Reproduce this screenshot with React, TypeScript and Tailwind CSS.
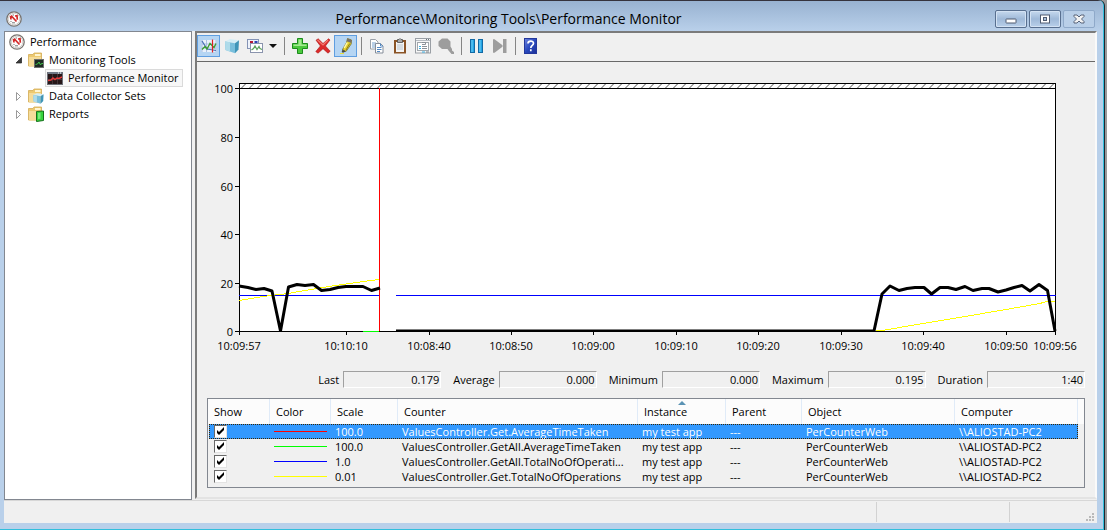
import React, { useState } from "react";

type IconProps = { children: React.ReactNode };

function Icon({ children }: IconProps) {
  return (
    <svg viewBox="0 0 16 16" className="size-4 shrink-0" aria-hidden="true">
      {children}
    </svg>
  );
}

function GaugeIcon() {
  return (
    <Icon>
      <circle cx="8" cy="8" r="7.2" fill="#fdfdfd" stroke="#77736f" strokeWidth="1.3" />
      <circle cx="8" cy="8" r="5.8" fill="none" stroke="#c9c5c0" strokeWidth="0.8" />
      <path d="M4.500 5l.5 3.500M5 4.500l5.500 6M9 5l2-.2.3 4" stroke="#d42a2a" strokeWidth="1.7" fill="none" />
      <path d="M6.500 4h1.500M6 11.800h3M4.500 10l1 1" stroke="#555" strokeWidth="0.8" />
    </Icon>
  );
}

function FolderBase() {
  return (
    <>
      <path d="M0.500 2.500h4.500l1-1.500h7.500v13h-13z" fill="#ecc970" stroke="#d3ab55" strokeWidth="0.8" />
      <path d="M1 5h12v9.500h-12z" fill="#f5dc9a" />
      <path d="M7 2h5.500v2H7z" fill="#fff5d0" />
    </>
  );
}

function MonitorFolderIcon() {
  return (
    <Icon>
      <FolderBase />
      <rect x="6.500" y="7.500" width="9" height="8" fill="#1e2a22" stroke="#6d6f6d" />
      <path d="M7.500 12.500l2-.5 1.500-2 1.500 3 1-1.500h1.500" stroke="#41c24a" fill="none" />
    </Icon>
  );
}

function CubeShape() {
  return (
    <>
      <path d="M1 3.500L6 1l9 1.200-4 3z" fill="#d5eef6" />
      <path d="M1 3.500l10 1.700v10L1.500 12z" fill="#79bfdc" />
      <path d="M11 5.200l4-3-.5 9.300-3.500 3.700z" fill="#3f95b8" />
      <path d="M1 3.500l5 .8v9.400L1.500 12z" fill="#aedbea" />
    </>
  );
}

function DataFolderIcon() {
  return (
    <Icon>
      <FolderBase />
      <g transform="translate(4.500 4.500) scale(0.74)">
        <CubeShape />
      </g>
    </Icon>
  );
}

function ReportFolderIcon() {
  return (
    <Icon>
      <FolderBase />
      <path d="M8.500 5.500l7-.5v9.500l-7 1z" fill="#36d23c" stroke="#15701c" />
      <path d="M10 7l2.500-.3v6l-2.500 .4z" fill="#7aea7c" />
    </Icon>
  );
}

function PerfMonIcon() {
  return (
    <Icon>
      <rect x="0.500" y="2.500" width="15" height="12" fill="#261719" stroke="#6b6e76" />
      <rect x="1" y="2" width="14" height="2" fill="#6f7885" />
      <path d="M11 3h1m1 0h1" stroke="#fff" />
      <path d="M1 9.500h14M5.500 4v10M10.500 4v10" stroke="#59484b" strokeWidth="0.6" />
      <path d="M1 10.500l3-.5 2-2 2 1.500 2-1.500 2 .5 3-1.500" stroke="#e53a3a" strokeWidth="1.4" fill="none" />
    </Icon>
  );
}

function GraphViewIcon() {
  return (
    <Icon>
      <rect x="0.500" y="2" width="15" height="12" fill="#e9f1fb" />
      <path d="M1 2v12M5.500 2v12M1 6h14M1 10h14M15 2v12" stroke="#9cb4da" strokeWidth="0.8" />
      <path d="M1 3l5 8 3 .5 6 1" stroke="#4870b6" strokeWidth="1.2" fill="none" />
      <path d="M1 11.500l3-3 2 2.500 3-5.500 2 2 2 2 2-4" stroke="#3d9d33" strokeWidth="1.400" fill="none" />
      <path d="M11.500 1.500v13" stroke="#e02222" strokeWidth="1.200" />
    </Icon>
  );
}

function GraphTypeIcon() {
  return (
    <Icon>
      <rect x="0.500" y="1.500" width="11" height="9" fill="#eef2fa" stroke="#8493b5" />
      <rect x="3" y="3" width="3" height="2.500" fill="#b51935" />
      <rect x="7.500" y="3" width="3" height="2" fill="#2c3fb2" />
      <rect x="3.500" y="5.500" width="12" height="9" fill="#fff" stroke="#8a94ad" />
      <path d="M4.500 12l2-1.500 1.500-2.500 2 3.500L12 8.500l1 2 2 1" stroke="#5aa35b" fill="none" strokeWidth="1.200" />
    </Icon>
  );
}

function PlusIcon() {
  return (
    <Icon>
      <path d="M5.500.5h5v5h5v5h-5v5h-5v-5h-5v-5h5z" fill="#4cc93e" stroke="#1b8c1b" />
      <path d="M6.500 1.500h3v5h5v1.500h-13V6.500h5z" fill="#a3ea91" />
    </Icon>
  );
}

function DeleteIcon() {
  return (
    <Icon>
      <path d="M1 2.200L3.200.8 8 5.500 13.500.8 15 2l-4.600 6 4.800 5.200-2.200 2L8 10.700l-5 4.500-2.200-1.600L5.400 8z" fill="#dc2a2a" stroke="#a91616" strokeWidth="0.6" />
      <path d="M2.500 2L8 7l5-5" stroke="#f37a70" strokeWidth="1.100" fill="none" />
    </Icon>
  );
}

function HighlighterIcon() {
  return (
    <Icon>
      <path d="M9.500.5l4 1.500-.3 4-5.200 7.500-3.500-2 4-7z" fill="#e6d22c" stroke="#6d6420" strokeWidth="0.7" />
      <path d="M9.500.5l4 1.500-.2 3-4.500-1.800z" fill="#77706a" />
      <path d="M9.200 4.500L6.200 10" stroke="#fff9b0" strokeWidth="1.500" />
      <path d="M11.800 5.500L8 12" stroke="#8b7d1f" strokeWidth="1" />
      <path d="M4.500 11.500l3.300 1.900-2.800 1.300-1.300-.8z" fill="#4a4c42" />
      <path d="M2 15.500h4" stroke="#e8e13c" />
    </Icon>
  );
}

function CopyIcon() {
  return (
    <Icon>
      <path d="M1.500 1.500h5l2.500 2.500v7h-7.500z" fill="#fff" stroke="#9aa0a8" />
      <path d="M3 5h4M3 7h4M3 9h3" stroke="#74a0cd" />
      <path d="M6.500 5.500h5l2.500 2.500v7h-7.500z" fill="#fff" stroke="#858d99" />
      <path d="M11.500 5.500v2.500H14M8 9.500h4.500M8 11.500h4.500M8 13.500h3" stroke="#5388c4" fill="none" />
    </Icon>
  );
}

function PasteIcon() {
  return (
    <Icon>
      <rect x="2" y="2" width="12" height="13.500" fill="#8b5426" />
      <rect x="4" y="4" width="8" height="10" fill="#f4f4f4" />
      <path d="M5.500 1.500h1.500L8 .5l1 1h1.500v3h-5z" fill="#a9a9a9" stroke="#4d4d4d" strokeWidth="0.8" />
      <path d="M5 7h6M5 9h6M5 11h6" stroke="#9db0bd" strokeWidth="0.7" />
    </Icon>
  );
}

function PropertiesIcon() {
  return (
    <Icon>
      <rect x="0.500" y="0.500" width="15" height="14.500" fill="#f7f7f7" stroke="#9a9fa5" />
      <path d="M1 2.500h14" stroke="#b7bcc2" />
      <path d="M11 1.500h1m1 0h1" stroke="#69717a" />
      <rect x="2.500" y="4.500" width="11" height="8" fill="#fff" stroke="#a1a7ac" />
      <path d="M7 4.500h3.500v2H7M7 8.500h5M7 10.500h5" stroke="#8c9198" fill="none" />
      <path d="M4 8.500h2M4 10.500h2M7 14h3" stroke="#37aee2" />
      <path d="M11 14h3" stroke="#7c8288" />
    </Icon>
  );
}

function ZoomIcon() {
  return (
    <Icon>
      <path d="M4 .5h5.500L12.500 3.500v5l1.500 2.500v1.500l2 1.500v2h-2.500L10.500 12.500 9.500 11H4L.5 8V3.500z" fill="#9d9d9d" />
    </Icon>
  );
}

function PauseIcon() {
  return (
    <Icon>
      <rect x="1.500" y="1.500" width="4" height="13" fill="#24a4e4" stroke="#126aa5" />
      <rect x="9.500" y="1.500" width="4" height="13" fill="#24a4e4" stroke="#126aa5" />
      <path d="M3 2v12M11 2v12" stroke="#75cff6" />
    </Icon>
  );
}

function StepIcon() {
  return (
    <Icon>
      <path d="M1 1.200h1.500l8 6v1.600l-8 6H1zM11 1h3.500v14H11z" fill="#9d9d9d" />
    </Icon>
  );
}

function HelpIcon() {
  return (
    <svg viewBox="0 0 16 16" className="size-4 shrink-0" aria-hidden="true">
      <defs>
        <linearGradient id="help-blue" x1="0" y1="0" x2="1" y2="1">
          <stop offset="0" stopColor="#6f86e0" />
          <stop offset="0.500" stopColor="#2848bd" />
          <stop offset="1" stopColor="#1d3198" />
        </linearGradient>
      </defs>
      <rect x="1.500" y="0.500" width="12" height="15" fill="url(#help-blue)" stroke="#23379b" />
      <path d="M5 5.500C5 2.300 10.500 2.300 10.500 5.300 10.500 7.500 7.800 7.400 7.800 10M7.800 11.300v2" stroke="#fff" strokeWidth="1.700" fill="none" />
    </svg>
  );
}

function ToolButton({ label, active, children }: { label: string; active?: boolean; children: React.ReactNode }) {
  return (
    <button
      type="button"
      aria-label={label}
      className={
        active
          ? "flex h-[22px] w-[23px] items-center justify-center border border-[#5f9ee0] bg-[#b5d5f3]"
          : "flex h-[22px] w-[23px] items-center justify-center"
      }
    >
      {children}
    </button>
  );
}

function Separator() {
  return (
    <div className="flex h-[22px] w-2 items-center justify-center">
      <div className="h-[18px] w-px bg-[#858585]" />
    </div>
  );
}

function Toolbar() {
  return (
    <div role="toolbar" aria-label="Graph" className="flex h-[29px] items-start border-b border-[#696969] pt-0.5">
      <ToolButton label="View current activity" active><GraphViewIcon /></ToolButton>
      <ToolButton label="View log data"><Icon><CubeShape /></Icon></ToolButton>
      <ToolButton label="Change graph type"><GraphTypeIcon /></ToolButton>
      <button type="button" aria-label="Graph type menu" className="flex h-[22px] w-3.5 items-center justify-center">
        <svg viewBox="0 0 8 4" className="h-1 w-2" aria-hidden="true"><path d="M0 0h8L4 4z" fill="#111" /></svg>
      </button>
      <Separator />
      <ToolButton label="Add"><PlusIcon /></ToolButton>
      <ToolButton label="Delete"><DeleteIcon /></ToolButton>
      <ToolButton label="Highlight" active><HighlighterIcon /></ToolButton>
      <Separator />
      <ToolButton label="Copy properties"><CopyIcon /></ToolButton>
      <ToolButton label="Paste counter list"><PasteIcon /></ToolButton>
      <ToolButton label="Properties"><PropertiesIcon /></ToolButton>
      <ToolButton label="Zoom"><ZoomIcon /></ToolButton>
      <Separator />
      <ToolButton label="Freeze display"><PauseIcon /></ToolButton>
      <ToolButton label="Update data"><StepIcon /></ToolButton>
      <Separator />
      <ToolButton label="Help"><HelpIcon /></ToolButton>
    </div>
  );
}

function Expander({ open }: { open?: boolean }) {
  return (
    <svg viewBox="0 0 8 10" className="h-2.5 w-2 shrink-0" aria-hidden="true">
      {open ? (
        <path d="M6.500 2.500v5.500h-5.500z" fill="#3b3b3b" stroke="#222" strokeWidth="0.700" />
      ) : (
        <path d="M1.500 1.500v8L5.500 5.500z" fill="#fff" stroke="#9a9a9a" />
      )}
    </svg>
  );
}

function Tree() {
  return (
    <nav aria-label="Console tree" className="w-[188px] shrink-0 border border-[#828790] bg-white pt-px whitespace-nowrap">
      <ul>
        <li className="flex h-[18px] items-center gap-[5px] pl-1"><GaugeIcon />Performance</li>
        <li className="flex h-[18px] items-center pl-[10px]">
          <Expander open /><span className="ml-[5px] flex items-center gap-[5px]"><MonitorFolderIcon />Monitoring Tools</span>
        </li>
        <li className="flex h-[18px] items-center pl-10">
          <span className="flex h-[18px] items-center gap-[5px] border border-[#dadada] bg-[#f7f7f7] pl-px pr-[3px]"><PerfMonIcon />Performance Monitor</span>
        </li>
        <li className="flex h-[18px] items-center pl-[10px]">
          <Expander /><span className="ml-[5px] flex items-center gap-[5px]"><DataFolderIcon />Data Collector Sets</span>
        </li>
        <li className="flex h-[18px] items-center pl-[10px]">
          <Expander /><span className="ml-[5px] flex items-center gap-[5px]"><ReportFolderIcon />Reports</span>
        </li>
      </ul>
    </nav>
  );
}

const yTicks = [
  { label: "100", y: 88 },
  { label: "80", y: 137 },
  { label: "60", y: 186 },
  { label: "40", y: 234 },
  { label: "20", y: 283 },
  { label: "0", y: 331 },
];

const xTicks = [
  { label: "10:09:57", x: 239 },
  { label: "10:10:10", x: 346 },
  { label: "10:08:40", x: 429 },
  { label: "10:08:50", x: 511 },
  { label: "10:09:00", x: 593 },
  { label: "10:09:10", x: 676 },
  { label: "10:09:20", x: 758 },
  { label: "10:09:30", x: 841 },
  { label: "10:09:40", x: 923 },
  { label: "10:09:50", x: 1006 },
  { label: "10:09:56", x: 1055 },
];

const selectedLeft =
  "239,286 248,287.5 256,289.5 264,288.5 272,291 280.5,331 288.5,287 297,284.5 305,285.5 313.5,284.5 321.500,290.5 330,289.5 338,287.5 346,286.5 363,286.5 371.5,290.5 380,288";
const selectedRight =
  "396,331 874,331 882,294 890,286 899,290.5 907,288.5 915,287.5 924,287.5 931.5,294 940,287.5 948,287.5 956,289.5 965,286.5 973,290.5 982,288.5 989,288.5 998,292 1006,290 1014,287.5 1022,285.5 1030,291 1039,284.5 1047.5,290.5 1055,331";

function Chart() {
  return (
    <svg viewBox="197 62 898 300" className="block w-full" role="img" aria-label="Performance graph">
      <defs>
        <pattern id="hatch" x="240" y="84" width="8" height="4" patternUnits="userSpaceOnUse">
          <path d="M1 4.500l5-5" stroke="#222" strokeWidth="0.800" />
        </pattern>
        <clipPath id="plot">
          <rect x="238" y="83" width="819" height="249" />
        </clipPath>
      </defs>
      <rect x="239.500" y="83.500" width="816" height="248" fill="#fff" stroke="#000" />
      <rect x="240" y="84" width="815" height="4" fill="url(#hatch)" />
      <path d="M239 88.500h817" stroke="#000" />
      <g shapeRendering="crispEdges" fill="none">
        <path d="M363 331.500h16" stroke="#00ff00" />
        <path d="M239 295.500h140M396 295.500h660" stroke="#0000ff" />
        <path d="M239 300.500l24-4 25-3 17-3 24-4 34-5 16-2" stroke="#ffff00" />
        <path d="M876 330.500l6 0 41-7 42-7 41-7 34-6 8-2.500h7" stroke="#ffff00" />
        <path d="M379.500 88v243" stroke="#ff0000" />
      </g>
      <g fill="none" stroke="#000" strokeWidth="3" strokeLinejoin="round" clipPath="url(#plot)">
        <polyline points={selectedLeft} />
        <polyline points={selectedRight} />
      </g>
      <g fill="#000" fontSize="11">
        {yTicks.map((t) => (
          <g key={t.label}>
            <path d={`M235 ${t.y + 0.5}h4`} stroke="#000" />
            <text x="233" y={t.y + 5} textAnchor="end">{t.label}</text>
          </g>
        ))}
        {xTicks.map((t) => (
          <g key={t.label}>
            <path d={`M${t.x + 0.5} 332v3`} stroke="#000" />
            <text x={t.x} y="350" textAnchor="middle">{t.label}</text>
          </g>
        ))}
      </g>
    </svg>
  );
}

const stats = [
  { label: "Last", value: "0.179" },
  { label: "Average", value: "0.000" },
  { label: "Minimum", value: "0.000" },
  { label: "Maximum", value: "0.195" },
  { label: "Duration", value: "1:40" },
];

function Stats() {
  return (
    <dl className="mt-[9px] flex justify-end gap-3 px-[10px]">
      {stats.map((s) => (
        <div key={s.label} className="flex items-center gap-1">
          <dt>{s.label}</dt>
          <dd className="h-[17px] w-[98px] border border-t-[#a0a0a0] border-r-white border-b-white border-l-[#a0a0a0] pr-px text-right leading-[15px]">
            {s.value}
          </dd>
        </div>
      ))}
    </dl>
  );
}

const headers = ["Show", "Color", "Scale", "Counter", "Instance", "Parent", "Object", "Computer"];

const counters = [
  { line: "bg-[#ff0000]", scale: "100.0", counter: "ValuesController.Get.AverageTimeTaken" },
  { line: "bg-[#00ff00]", scale: "100.0", counter: "ValuesController.GetAll.AverageTimeTaken" },
  { line: "bg-[#0000ff]", scale: "1.0", counter: "ValuesController.GetAll.TotalNoOfOperati..." },
  { line: "bg-[#ffff00]", scale: "0.01", counter: "ValuesController.Get.TotalNoOfOperations" },
];

function ShowBox({ label }: { label: string }) {
  const [on, setOn] = useState(true);
  return (
    <label className="relative block size-[13px] border border-t-[#696969] border-r-[#e3e3e3] border-b-[#e3e3e3] border-l-[#696969] bg-white">
      <input
        type="checkbox"
        aria-label={label}
        checked={on}
        onChange={(e) => setOn(e.target.checked)}
        className="absolute inset-0 size-full appearance-none"
      />
      {on && (
        <svg viewBox="0 0 11 11" className="pointer-events-none block size-[11px]" aria-hidden="true">
          <path d="M2 4v3l2 2 5-5V1L4 6z" fill="#000" />
        </svg>
      )}
    </label>
  );
}

function CounterTable() {
  return (
    <div className="mx-[10px] mt-[10px] h-[90px] border border-[#828790]">
      <table className="w-full table-fixed border-collapse">
        <colgroup>
          <col className="w-[62px]" />
          <col className="w-[61px]" />
          <col className="w-[67px]" />
          <col />
          <col className="w-[88px]" />
          <col className="w-[76px]" />
          <col className="w-[153px]" />
          <col className="w-[123px]" />
          <col className="w-[6px]" />
        </colgroup>
        <thead>
          <tr className="h-[25px] bg-[#fcfcfc]">
            {headers.map((h) => (
              <th key={h} scope="col" className="relative p-0 text-left font-normal">
                <div className="flex h-[25px] items-center border-r border-[#e0ebf8] pl-1.5">{h}</div>
                {h === "Instance" && (
                  <svg viewBox="0 0 8 4" className="absolute top-0.5 left-1/2 h-1 w-2 -translate-x-1/2" aria-hidden="true">
                    <path d="M4 0l4 4H0z" fill="#5b93b4" />
                  </svg>
                )}
              </th>
            ))}
            <td className="p-0" />
          </tr>
        </thead>
        <tbody>
          {counters.map((c, i) => (
            <tr key={c.counter} className="h-[15px] leading-[15px]">
              <td className="p-0 pl-px" colSpan={8}>
                <div
                  className={
                    i === 0
                      ? "flex h-[15px] items-center bg-[#3399ff] text-white outline-1 -outline-offset-1 outline-dotted outline-[#3c2600]"
                      : "flex h-[15px] items-center"
                  }
                >
                  <div className="w-[61px] shrink-0 pl-[5px]"><ShowBox label={`Show ${c.counter}`} /></div>
                  <div className="w-[61px] shrink-0 px-1"><div className={`h-px ${c.line}`} /></div>
                  <div className="w-[67px] shrink-0 pl-1">{c.scale}</div>
                  <div className="min-w-0 flex-1 truncate pl-1">{c.counter}</div>
                  <div className="w-[88px] shrink-0 pl-1">my test app</div>
                  <div className="w-[76px] shrink-0 pl-1">---</div>
                  <div className="w-[153px] shrink-0 pl-1">PerCounterWeb</div>
                  <div className="w-[123px] shrink-0 pl-1">{"\\\\ALIOSTAD-PC2"}</div>
                </div>
              </td>
              <td className="p-0" />
            </tr>
          ))}
        </tbody>
      </table>
    </div>
  );
}

function CaptionButton({ label, faded, children }: { label: string; faded?: boolean; children: React.ReactNode }) {
  return (
    <button
      type="button"
      aria-label={label}
      className={
        faded
          ? "flex h-[18px] w-8 items-center justify-center rounded-xs border border-[#8fa9c9] bg-[#b9cfe8]"
          : "flex h-[18px] w-8 items-center justify-center rounded-xs border border-[#586f8f] bg-linear-to-b from-[#c6d9ee] via-[#9fb9d8] to-[#b9d0ea] inset-ring inset-ring-[#d3e2f3]"
      }
    >
      <svg viewBox="0 0 12 10" className="h-2.5 w-3" aria-hidden="true">{children}</svg>
    </button>
  );
}

function TitleBar() {
  return (
    <header className="flex h-[31px] border-t border-[#35333d] bg-linear-to-b from-[#98b2d1] to-[#b9d0ea] pr-2 pl-1.5">
      <div className="pt-[10px]"><GaugeIcon /></div>
      <h1 className="flex-1 pt-1.5 text-center text-[14px] leading-6">Performance\Monitoring Tools\Performance Monitor</h1>
      <div className="flex gap-0.5 pt-[9px]">
        <CaptionButton label="Minimize"><rect x="1" y="5" width="10" height="4" rx="0.500" fill="#fff" stroke="#4f5b70" /></CaptionButton>
        <CaptionButton label="Restore">
          <rect x="1.500" y="1" width="9" height="8" fill="#fff" stroke="#4f5b70" />
          <rect x="4.500" y="3.500" width="3" height="3" fill="#a8c0dc" stroke="#4f5b70" />
        </CaptionButton>
        <CaptionButton label="Close" faded>
          <path d="M1 1h3l2 2 2-2h3v1.500L8.500 5 11 7.500V9H8L6 7 4 9H1V7.500L3.500 5 1 2.500z" fill="#f2f2f2" stroke="#59647a" />
        </CaptionButton>
      </div>
    </header>
  );
}

function StatusBar() {
  return (
    <footer className="flex h-[23px] border-t border-[#d7d7d7] bg-[#f0f0f0]">
      <div className="my-px flex-1 border-r border-[#d2d2d2]" />
      <div className="my-px w-[133px] border-r border-[#d2d2d2]" />
      <div className="flex w-[87px] items-end justify-end pr-[3px] pb-0.5">
        <svg viewBox="0 0 8 8" className="size-2" aria-hidden="true">
          <path d="M6 0h2v2H6zM3 3h2v2H3zM6 3h2v2H6zM0 6h2v2H0zM3 6h2v2H3zM6 6h2v2H6z" fill="#b9b9b9" />
        </svg>
      </div>
    </footer>
  );
}

export default function App() {
  return (
    <div className="flex min-h-screen bg-[#9a9a9a] pr-0.5 font-['Open_Sans','Noto_Sans',sans-serif] text-[11px] leading-4 text-black">
      <div className="flex flex-1 flex-col rounded-tr-md border-r border-[#1c2730] bg-[#1c2730]">
        <div className="flex flex-1 flex-col overflow-hidden rounded-tr-md border-r border-b border-r-[#31bfdc] border-b-[#31bfdc] bg-[#b9d0ea]">
          <TitleBar />
          <div className="mr-1.5 mb-1.5 ml-1 flex flex-1 flex-col bg-[#f0f0f0]">
            <div className="flex flex-1">
              <Tree />
              <main className="ml-[3px] mb-px flex flex-1 flex-col border-t-2 border-r-2 border-b-2 border-l-2 border-t-[#7b7b7b] border-r-[#fafafa] border-b-[#e3e3e3] border-l-[#7b7b7b]">
                <Toolbar />
                <Chart />
                <Stats />
                <CounterTable />
              </main>
            </div>
            <StatusBar />
          </div>
        </div>
      </div>
    </div>
  );
}
